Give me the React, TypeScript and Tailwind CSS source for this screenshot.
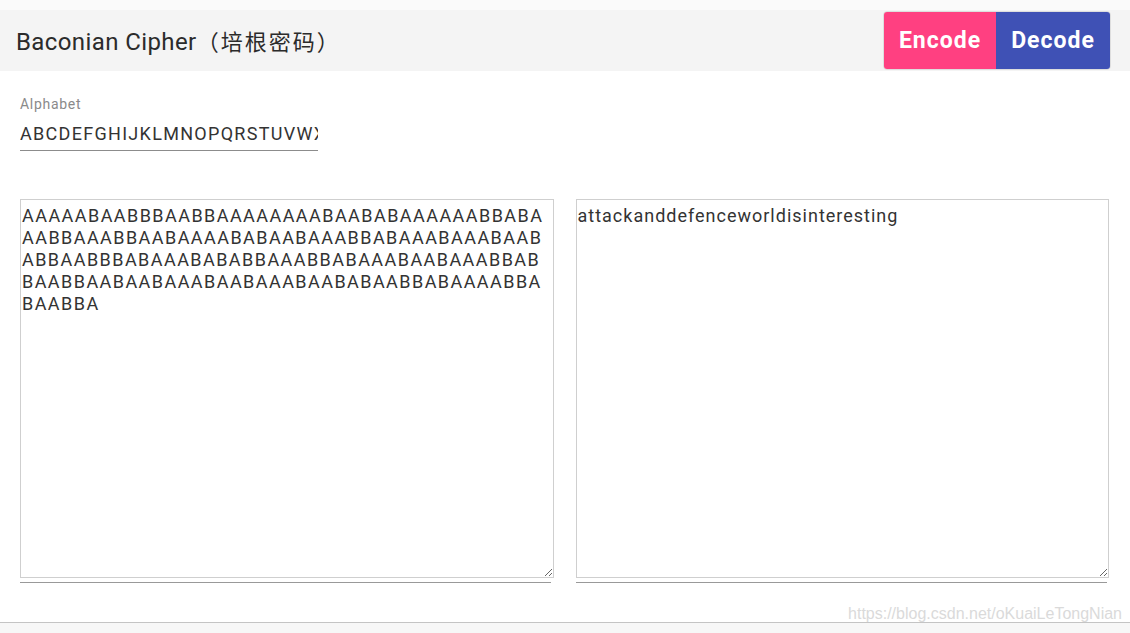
import { useState } from 'react';

const CIPHER =
  'AAAAABAABBBAABBAAAAAAAABAABABAAAAAABBABAAABBAAABBAABAAAABABAABAAABBABAAABAAABAABABBAABBBABAAABABABBAAABBABAAABAABAAABBABBAABBAABAABAAABAABAAABAABABAABBABAAAABBABAABBA';
const PLAIN = 'attackanddefenceworldisinteresting';

export default function App() {
  const [alphabet, setAlphabet] = useState('ABCDEFGHIJKLMNOPQRSTUVWXYZ');
  const [cipher, setCipher] = useState(CIPHER);
  const [plain, setPlain] = useState(PLAIN);

  return (
    <div className="relative flex h-[633px] w-full flex-col bg-[#fafafa] font-['Roboto','Noto_Sans_CJK_SC',sans-serif] text-[#333]">
      {/* top strip */}
      <div className="h-[10px]" />

      {/* Header */}
      <div className="flex h-[61px] items-start justify-between bg-[#f4f4f4] pl-[16px] pr-[19px]">
        <h1 className="mt-[15px] text-[24px] leading-[30px] font-normal text-[#2b2b2b]">
          <span className="tracking-[0.4px]">Baconian Cipher</span>
          <span className="font-['Noto_Sans_CJK_SC',sans-serif] text-[22px] tracking-[2px]">（培根密码）</span>
        </h1>
        <div className="mt-[1px] flex h-[59px] overflow-hidden rounded-[4px] border border-[#dedede]">
          <button className="h-full w-[112px] bg-[#ff4081] pt-[1px] text-[23px] font-bold tracking-[1px] text-white">
            Encode
          </button>
          <button className="h-full w-[114px] bg-[#3f51b5] pt-[1px] text-[23px] font-bold tracking-[1px] text-white">
            Decode
          </button>
        </div>
      </div>

      {/* Main */}
      <div className="flex flex-1 flex-col border-b border-[#c4c4c4] bg-white">
        <div className="px-[20px]">
          <label className="mt-[25px] block text-[14px] leading-[16px] tracking-[0.7px] text-[#8a8a8a]">
            Alphabet
          </label>
          <div className="mt-[10px] w-[298px] border-b border-[#8c8c8c] pb-[4px]">
            <input
              value={alphabet}
              onChange={e => setAlphabet(e.target.value)}
              className="block h-[24px] w-full bg-transparent text-[18px] leading-[24px] tracking-[1.3px] text-[#333] outline-none"
            />
          </div>
        </div>

        <div className="mt-[48px] grid grid-cols-2 gap-[22px] pl-[20px] pr-[21px]">
          <div>
            <textarea
              value={cipher}
              onChange={e => setCipher(e.target.value)}
              className="block h-[379px] w-full border border-[#cfcfcf] pt-[5px] pl-[1px] pr-[1px] text-[18px] leading-[22px] tracking-[1.45px] text-[#333] outline-none"
            />
            <div className="mt-[4px] mr-[3px] h-px bg-[#999]" />
          </div>
          <div>
            <textarea
              value={plain}
              onChange={e => setPlain(e.target.value)}
              className="block h-[379px] w-full border border-[#cfcfcf] pt-[5px] pl-[1px] pr-[1px] text-[18px] leading-[22px] tracking-[1px] text-[#333] outline-none"
            />
            <div className="mt-[4px] mr-[2px] h-px bg-[#999]" />
          </div>
        </div>
      </div>

      {/* bottom strip */}
      <div className="h-[10px] bg-[#f7f7f7]" />

      {/* watermark */}
      <div className="pointer-events-none absolute right-[8px] bottom-[10px] font-['Liberation_Sans',sans-serif] text-[16px] leading-[18px] text-[#dadada]">
        https://blog.csdn.net/oKuaiLeTongNian
      </div>
    </div>
  );
}
